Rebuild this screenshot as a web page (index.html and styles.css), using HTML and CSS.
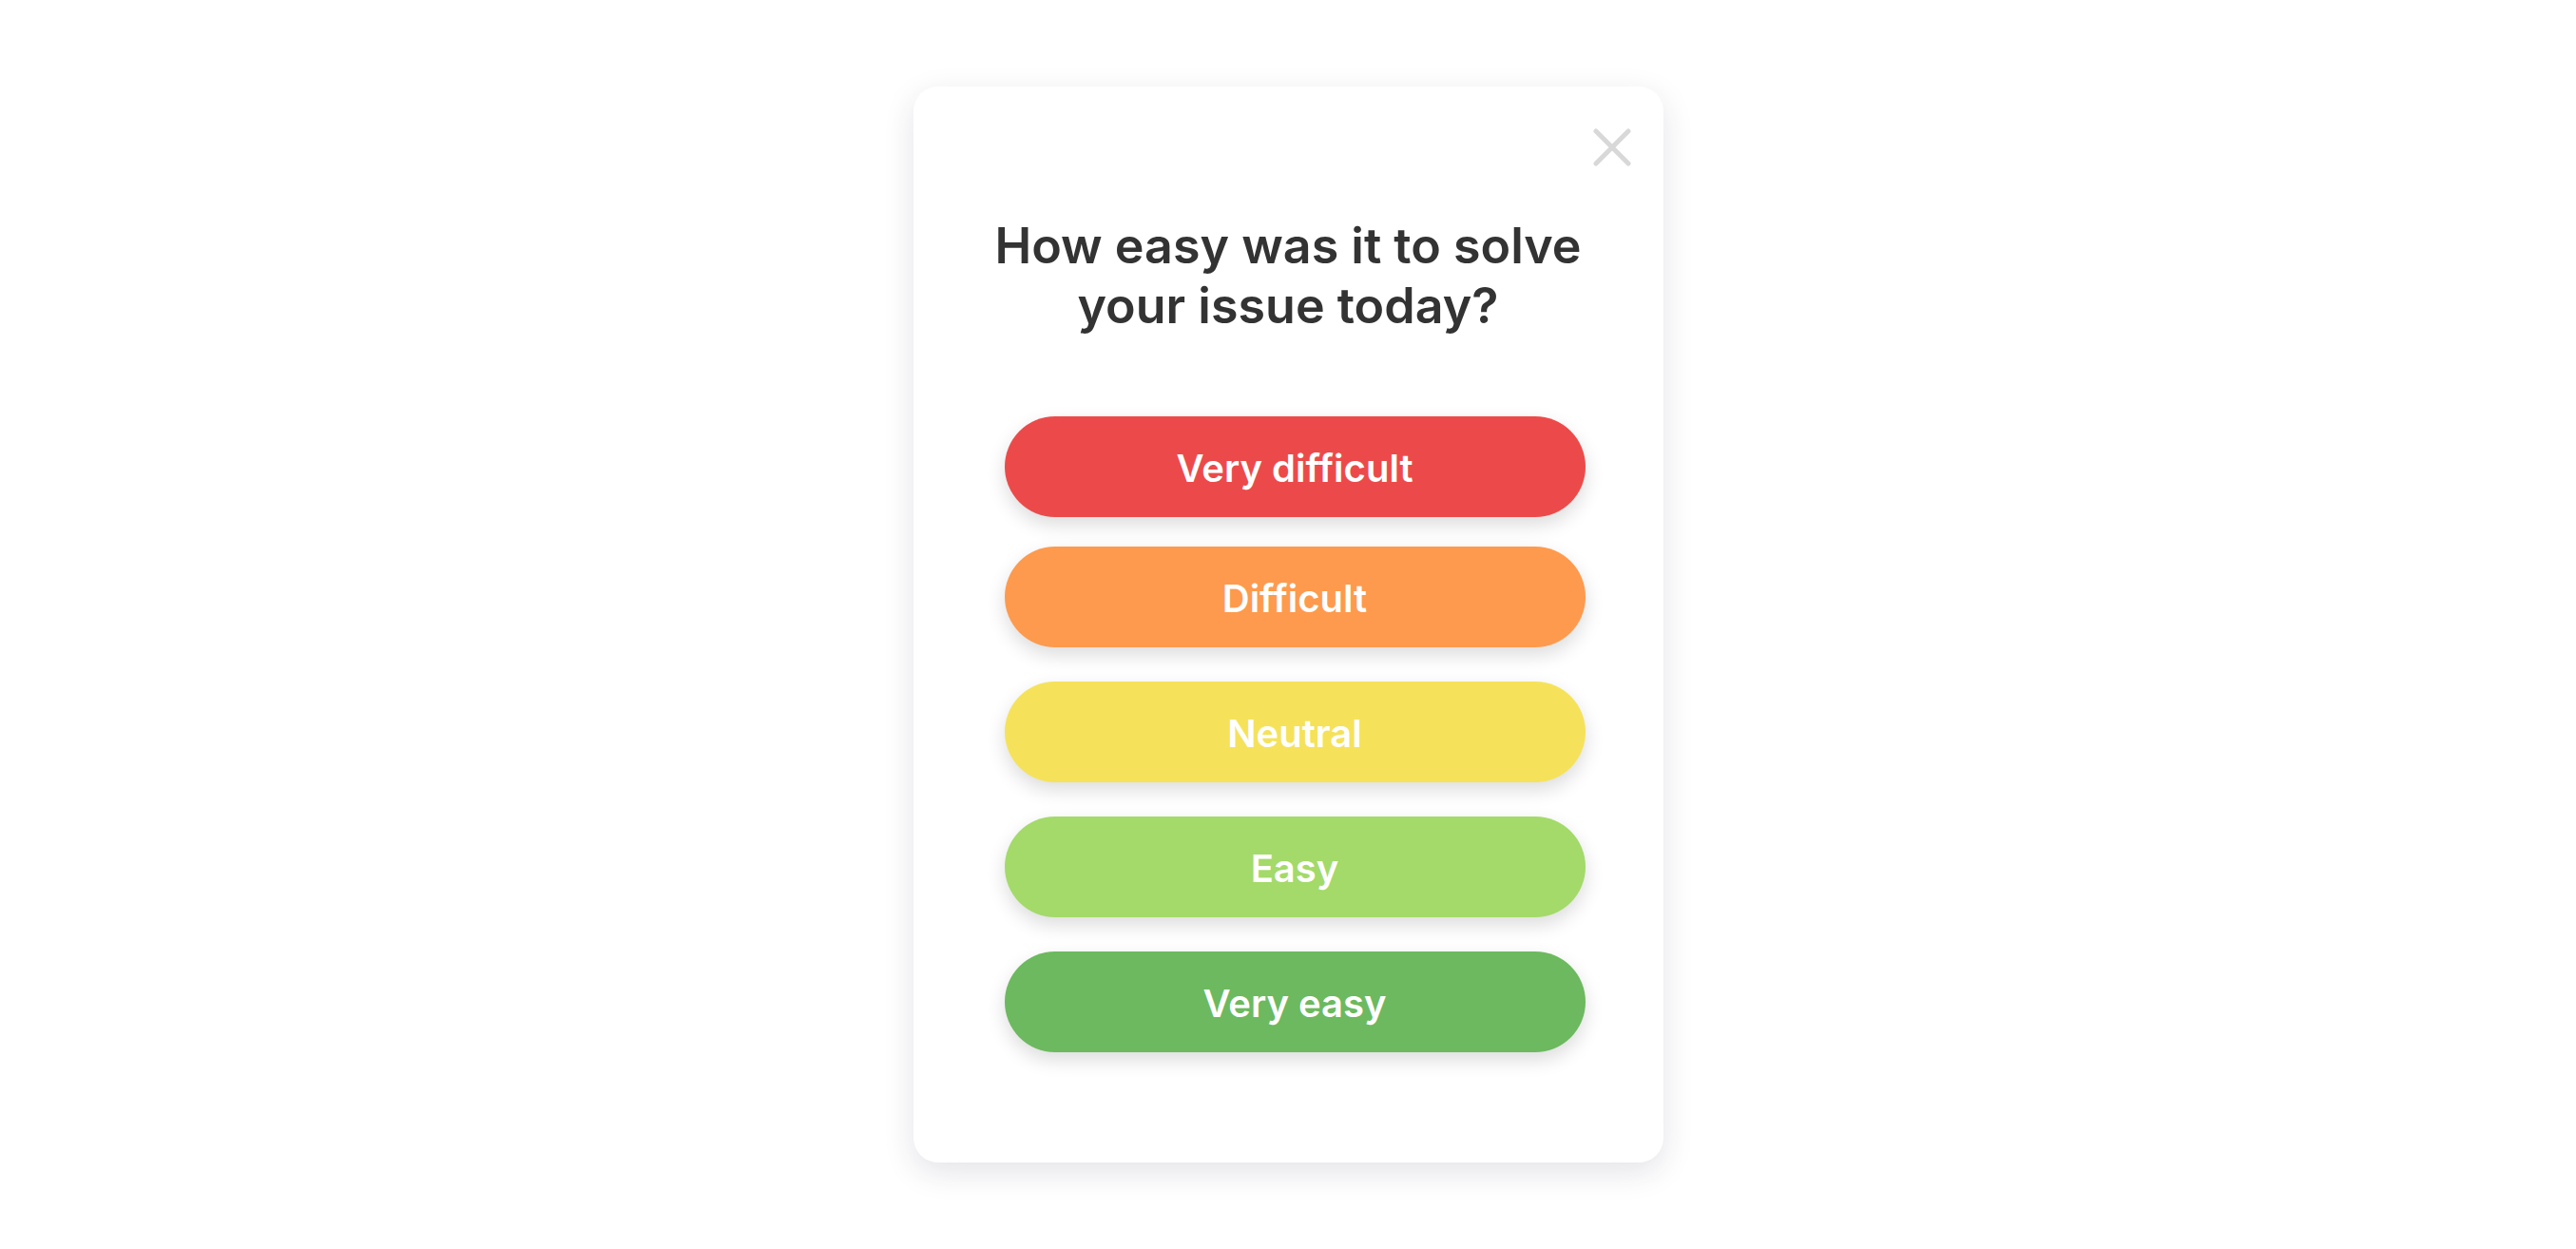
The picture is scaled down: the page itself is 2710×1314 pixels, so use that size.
FILE: index.html
```html
<!DOCTYPE html>
<html lang="en">
<head>
    <meta charset="UTF-8">
    <meta name="viewport" content="width=device-width, initial-scale=1.0">
    <title>Feedback</title>
    <link rel="stylesheet" href="styles.css">
</head>
<body>
    <div class="survey">
        <div class="survey-top">
            <button class="close" aria-label="Close">
                <svg width="40" height="40" viewBox="0 0 40 40">
                    <path d="M3 3 L37 37 M37 3 L3 37" stroke="#d8d8d8" stroke-width="5" stroke-linecap="round" fill="none"/>
                </svg>
            </button>
        </div>
        <h2 class="question">How easy was it to solve<br>your issue today?</h2>
        <div class="answers">
            <button class="answer very-difficult">Very difficult</button>
            <button class="answer difficult">Difficult</button>
            <button class="answer neutral">Neutral</button>
            <button class="answer easy">Easy</button>
            <button class="answer very-easy">Very easy</button>
        </div>
    </div>
</body>
</html>
```

FILE: styles.css
```css
body {
    margin: 0;
    min-height: 100vh;
    display: flex;
    align-items: center;
    justify-content: center;
    background: #ffffff;
    font-family: Inter, "Noto Sans", sans-serif;
}
.survey {
    width: 789px;
    box-sizing: border-box;
    padding: 44px 34px 116px 34px;
    background: white;
    border-radius: 26px;
    box-shadow: 0 10px 32px rgba(40, 40, 80, 0.13);
}
.survey-top {
    display: flex;
    justify-content: flex-end;
}
.close {
    width: 40px;
    height: 40px;
    padding: 0;
    border: none;
    background: none;
    cursor: pointer;
}
.close svg {
    display: block;
}
.question {
    margin: 52px 0 0 0;
    font-size: 52px;
    line-height: 63px;
    font-weight: 600;
    color: #333333;
    text-align: center;
}
.answers {
    margin-top: 85px;
    padding: 0 48px 0 62px;
    display: flex;
    flex-direction: column;
    gap: 36px;
}
.answer {
    height: 106px;
    padding-top: 4px;
    border: none;
    border-radius: 53px;
    color: white;
    font-family: inherit;
    font-size: 40px;
    font-weight: 600;
    cursor: pointer;
    box-shadow: 0 8px 20px rgba(0, 0, 0, 0.14);
}
.very-difficult { background: #ec4a4a; margin-bottom: -5px; }
.difficult { background: #fe9a4d; }
.neutral { background: #f5e25a; }
.easy { background: #a3da6a; }
.very-easy { background: #6cb95f; }
```
